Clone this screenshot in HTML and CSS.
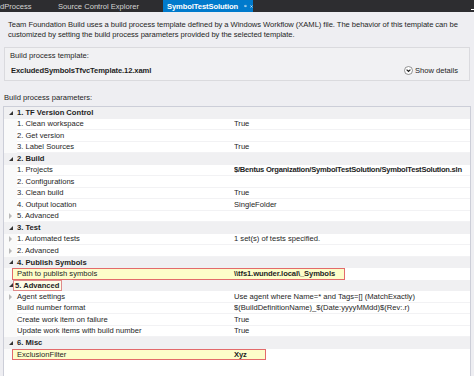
FILE: index.html
```html
<!DOCTYPE html>
<html>
<head>
<meta charset="utf-8">
<link rel="stylesheet" href="styles.css">
</head>
<body>
<div class="tabs">
  <div class="tab tab-cut">dProcess</div>
  <div class="tab tab-sce">Source Control Explorer</div>
  <div class="tab tab-active">
    <span class="tab-title">SymbolTestSolution</span>
    <svg class="pin" width="7" height="6" viewBox="0 0 7 6"><path d="M0 3H2M2 1V5M2 1.5H5.5V4.5H2M2 3.5H5.5" stroke="#fff" stroke-width="1" fill="none"/></svg>
    <svg class="close" width="7" height="7" viewBox="0 0 7 7"><path d="M1 1L6 6M6 1L1 6" stroke="#fff" stroke-width="1.4"/></svg>
  </div>
  <div class="tab-spacer"></div>
  <div class="tab-dash"></div>
</div>
<div class="content">
  <p class="desc">Team Foundation Build uses a build process template defined by a Windows Workflow (XAML) file. The behavior of this template can be customized by setting the build process parameters provided by the selected template.</p>
  <div class="tpl-box">
    <div class="tpl-label">Build process template:</div>
    <div class="tpl-row">
      <span class="tpl-name">ExcludedSymbolsTfvcTemplate.12.xaml</span>
      <span class="show-details">
        <svg width="9" height="9" viewBox="0 0 9 9"><circle cx="4.5" cy="4.5" r="4" fill="#fff" stroke="#777" stroke-width="0.8"/><path d="M2.6 3.6L4.5 5.5L6.4 3.6" stroke="#222" stroke-width="1.2" fill="none"/></svg>
        Show details
      </span>
    </div>
  </div>
  <div class="params-label">Build process parameters:</div>
  <div class="grid">
    <div class="row cat"><span class="g"><i class="exp"></i></span><span class="n">1. TF Version Control</span></div>
    <div class="row"><span class="g"></span><span class="n">1. Clean workspace</span><span class="v">True</span></div>
    <div class="row"><span class="g"></span><span class="n">2. Get version</span><span class="v"></span></div>
    <div class="row"><span class="g"></span><span class="n">3. Label Sources</span><span class="v">True</span></div>
    <div class="row cat"><span class="g"><i class="exp"></i></span><span class="n">2. Build</span></div>
    <div class="row"><span class="g"></span><span class="n">1. Projects</span><span class="v b">$/Bentus Organization/SymbolTestSolution/SymbolTestSolution.sln</span></div>
    <div class="row"><span class="g"></span><span class="n">2. Configurations</span><span class="v"></span></div>
    <div class="row"><span class="g"></span><span class="n">3. Clean build</span><span class="v">True</span></div>
    <div class="row"><span class="g"></span><span class="n">4. Output location</span><span class="v">SingleFolder</span></div>
    <div class="row"><span class="g"><i class="col"></i></span><span class="n">5. Advanced</span><span class="v"></span></div>
    <div class="row cat"><span class="g"><i class="exp"></i></span><span class="n">3. Test</span></div>
    <div class="row"><span class="g"><i class="col"></i></span><span class="n">1. Automated tests</span><span class="v">1 set(s) of tests specified.</span></div>
    <div class="row"><span class="g"><i class="col"></i></span><span class="n">2. Advanced</span><span class="v"></span></div>
    <div class="row cat"><span class="g"><i class="exp"></i></span><span class="n">4. Publish Symbols</span></div>
    <div class="row hl-row"><span class="g"></span><div class="hl hl-path"><span class="hn">Path to publish symbols</span><span class="hv">\\tfs1.wunder.local\_Symbols</span></div></div>
    <div class="row cat"><span class="g"><i class="exp"></i></span><span class="n"><span class="cat-hl">5. Advanced</span></span></div>
    <div class="row"><span class="g"><i class="col"></i></span><span class="n">Agent settings</span><span class="v">Use agent where Name=* and Tags=[] (MatchExactly)</span></div>
    <div class="row"><span class="g"></span><span class="n">Build number format</span><span class="v">$(BuildDefinitionName)_$(Date:yyyyMMdd)$(Rev:.r)</span></div>
    <div class="row"><span class="g"></span><span class="n">Create work item on failure</span><span class="v">True</span></div>
    <div class="row"><span class="g"></span><span class="n">Update work items with build number</span><span class="v">True</span></div>
    <div class="row cat"><span class="g"><i class="exp"></i></span><span class="n">6. Misc</span></div>
    <div class="row hl-row"><span class="g"></span><div class="hl hl-excl"><span class="hn">ExclusionFilter</span><span class="hv">Xyz</span></div></div>
  </div>
</div>
</body>
</html>
```

FILE: styles.css
```css
* { box-sizing: border-box; }
html, body { margin: 0; padding: 0; }
body {
  width: 474px;
  height: 376px;
  overflow: hidden;
  background: #eeeef2;
  font-family: "Liberation Sans", Arial, sans-serif;
  font-size: 7.6px;
  color: #1e1e1e;
  display: flex;
  flex-direction: column;
}
.tabs {
  display: flex;
  flex: 0 0 12px;
  height: 12px;
  background: #2d2d30;
  color: #d4d4d4;
  align-items: stretch;
}
.tab {
  display: flex;
  align-items: center;
  font-size: 7.6px;
}
.tab-cut { width: 58px; }
.tab-sce { width: 105px; }
.tab-active {
  width: 90px;
  background: #007acc;
  color: #fff;
  font-weight: bold;
  padding-left: 4px;
  gap: 3px;
  letter-spacing: -0.1px;
}
.tab-active .pin { margin-left: 3px; }
.tab-spacer { flex: 1; }
.tab-dash { width: 3px; height: 1px; background: #fff; align-self: flex-end; margin: 0 0 2px 0; }
.content {
  flex: 1;
  min-height: 0;
  display: flex;
  flex-direction: column;
  padding: 0 2px 0 3px;
}
.desc {
  margin: 0;
  padding: 8px 0 0 5px;
  line-height: 9.5px;
  width: 468px;
  letter-spacing: -0.05px;
}
.tpl-box {
  margin: 8px 2px 0 1px;
  border: 1px solid #dadade;
  background: #f1f1f3;
  flex: 0 0 34px;
  padding: 3px 0 0 5px;
}
.tpl-label { height: 9px; line-height: 9px; }
.tpl-row {
  display: flex;
  align-items: center;
  justify-content: space-between;
  margin-top: 5px;
  height: 10px;
}
.tpl-name { font-weight: bold; padding-left: 1px; letter-spacing: -0.1px; }
.show-details {
  display: flex;
  align-items: center;
  gap: 2px;
  padding-right: 11px;
}
.params-label { padding: 12px 0 0 1px; flex: 0 0 25px; line-height: 9px; }
.grid {
  flex: 1;
  min-height: 0;
  overflow: hidden;
  border: 1px solid #ccced8;
  border-bottom: none;
  background: #fff;
  margin-right: 1px;
}
.row {
  display: grid;
  grid-template-columns: 13px 217px 1fr;
  height: 11.5px;
  align-items: center;
  white-space: nowrap;
}
.row .g { height: 100%; display: flex; align-items: center; justify-content: center; background: #fafafa; }
.row .n, .row .v { height: 100%; display: flex; align-items: center; border-bottom: 1px solid #f2f2f4; }
.row .v { overflow: hidden; }
.b { font-weight: bold; letter-spacing: -0.25px; }
.row.cat { background: #f0f0f2; }
.row.cat .g { background: #f0f0f2; }
.row.cat .n { font-weight: bold; border-bottom: none; grid-column: 2 / 4; }
.exp {
  width: 0; height: 0;
  border-left: 4px solid transparent;
  border-bottom: 4px solid #333;
  display: block;
}
.col {
  width: 0; height: 0;
  border-top: 3px solid transparent;
  border-bottom: 3px solid transparent;
  border-left: 3px solid #b8b8b8;
  display: block;
}
.hl-row { grid-template-columns: 8px 1fr; }
.hl {
  height: 100%;
  border: 1px solid #e36b6b;
  background: #fdfdc9;
  display: grid;
  grid-template-columns: 221px 1fr;
  align-items: center;
}
.hl-path { width: 333px; }
.hl-excl { width: 254px; }
.hn { padding-left: 4px; }
.hv { font-weight: bold; letter-spacing: -0.1px; }
.cat-hl {
  border: 1px solid #e08a8a;
  background: #fdfde8;
  padding: 0 2px 0 1px;
  margin-left: -4px;
  height: 11px;
  display: inline-flex;
  align-items: center;
}
```
